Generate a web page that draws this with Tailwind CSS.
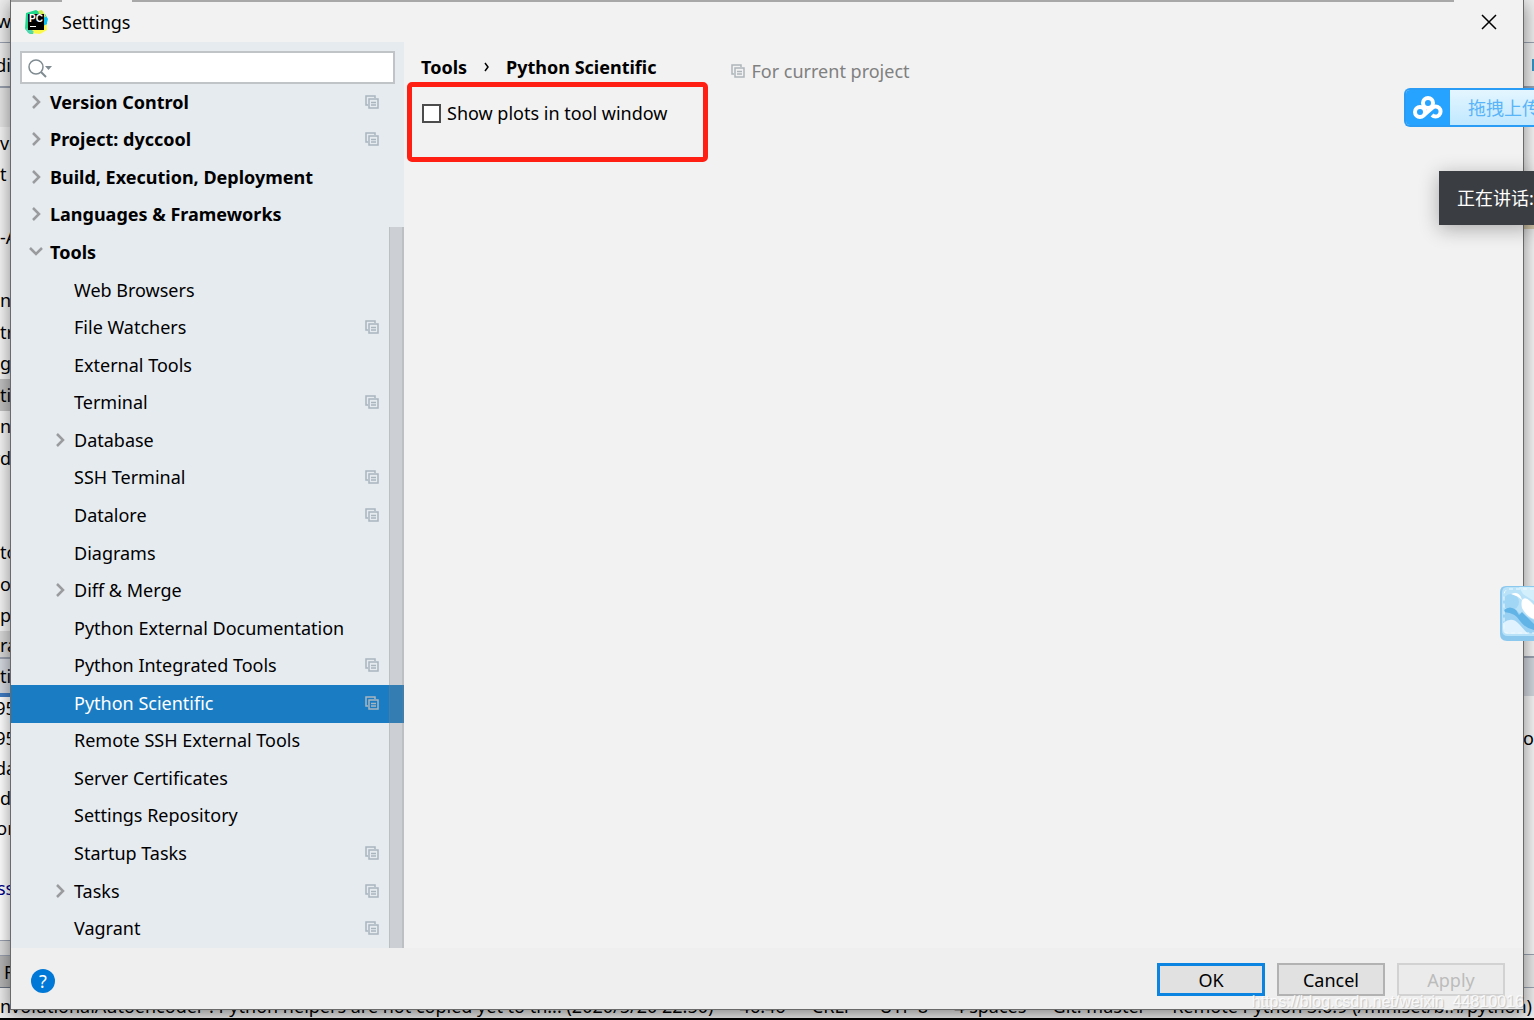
<!DOCTYPE html>
<html lang="en">
<head>
    <meta charset="UTF-8">
    <title>Settings</title>
    <script src="https://cdn.jsdelivr.net/npm/@tailwindcss/browser@4"></script>
</head>
<body class="font-['Noto_Sans','Noto_Sans_CJK_SC',sans-serif] text-[18px] leading-6 text-black">
<div class="relative h-screen overflow-hidden bg-white">

    <!-- IDE window behind the dialog -->
    <div class="flex h-full flex-col whitespace-nowrap">
        <div class="flex flex-1 justify-between">
            <div class="flex w-[11px] flex-col">
                <div class="flex h-[43px] items-center justify-end border-b border-gray-400 bg-[#ececec]">w</div>
                <div class="flex h-[45px] items-center justify-end border-b-2 border-gray-400 bg-[#ececec]">di</div>
                <div class="h-[39px] bg-[#e4e4e4]"></div>
                <div id="editor" class="flex h-[504px] flex-col"></div>
                <div class="flex h-[26px] items-end bg-[#d8d8d8]">ra</div>
                <div class="flex h-9 items-center border-t-2 border-gray-400 bg-[#d5d9e0]">ti</div>
                <div id="console" class="flex flex-1 flex-col shadow-[inset_0_4px_0_#3f7cc4]"></div>
                <div class="h-4 border-y border-gray-400 bg-[#dcdcdc]"></div>
                <div class="flex h-8 items-center border-b border-gray-500 bg-[#b4b4b4] pl-1">R</div>
            </div>
            <div class="flex w-3 flex-col">
                <div class="h-[43px] border-b border-gray-400 bg-[#ececec]"></div>
                <div class="flex h-[45px] items-center justify-end border-b-2 border-gray-400 bg-[#ececec]"><span class="h-3 w-[2px] bg-[#3592c4]"></span></div>
                <div class="h-[39px] bg-[#e4e4e4]"></div>
                <div class="h-[98px] bg-[#f4f4f4]"></div>
                <div class="h-1 bg-[#e0d3b4]"></div>
                <div class="h-[427px] bg-[#f4f4f4]"></div>
                <div class="h-10 border-t-2 border-gray-400 bg-[#d0d4dc]"></div>
                <div class="flex flex-1 items-start justify-end bg-[#f4f4f4] pt-[30px]">_o</div>
                <div class="h-[34px] border-y border-gray-400 bg-[#e6e6e6]"></div>
            </div>
        </div>
        <div class="flex h-8 items-center justify-between border-b-2 border-black bg-[#ececec] pt-[6px] pr-[2px]">
            <span>nvolutionalAutoencoder : Python helpers are not copied yet to th... (2020/5/20 22:50)</span>
            <span>46:46</span>
            <span>CRLF</span>
            <span>UTF-8</span>
            <span>4 spaces</span>
            <span>Git: master</span>
            <span>Remote Python 3.6.9 (/miniset/bin/python)</span>
        </div>
    </div>

    <!-- Settings dialog -->
    <div class="absolute inset-x-[10px] top-0 bottom-[10px] flex flex-col border-x border-b border-[#6a6a6a] bg-[#f2f2f2] shadow-[0_4px_16px_rgba(0,0,0,0.45)]">
        <div class="flex h-[2px]">
            <span class="w-[51px] bg-[#a8a8a8]"></span>
            <span class="w-[70px]"></span>
            <span class="flex-1 bg-[#a8a8a8]"></span>
            <span class="w-[69px]"></span>
        </div>
        <header class="flex h-10 items-center pl-[13px]">
            <svg class="size-6" viewBox="0 0 24 24">
                <path d="M16 3l5 1 3 5-2 7-5 1z" fill="#07c3f2"/>
                <path d="M2 3l10-3 5 3-2 9-6 12-3 0-5-5z" fill="#21d789"/>
                <path d="M15 1l4 0 3 6 1 13-7 4-9-1-1-4 9-9z" fill="#fcf84a"/>
                <path d="M19 5l4 3 0 6-4 2z" fill="#07c3f2"/>
                <path d="M14 1l4-1 3 7-4 2z" fill="#c5ec52"/>
                <path d="M1 18l6 1 3 3-3 2-3-1z" fill="#52d8b0"/>
                <rect x="4" y="4" width="16" height="16" fill="#000"/>
                <rect x="6" y="16" width="6" height="1" fill="#fff"/>
                <text x="5" y="12" font-size="10" font-weight="700" fill="#fff" font-family="Liberation Sans, sans-serif">PC</text>
            </svg>
            <h1 class="ml-[14px] flex-1">Settings</h1>
            <button class="mr-[26px]" aria-label="Close">
                <svg class="size-4" viewBox="0 0 16 16" fill="none" stroke="#000" stroke-width="1.5"><path d="M1 1l14 14M15 1L1 15"/></svg>
            </button>
        </header>

        <div class="flex min-h-0 flex-1">
            <aside class="relative flex w-[393px] flex-col bg-[#e6ebf0]">
                <div class="mx-[9px] mt-[9px] flex h-[33px] items-center border-2 border-[#c0c4c7] bg-white pl-[6px]">
                    <svg class="h-5 w-6 shrink-0" viewBox="0 0 24 20" fill="none" stroke="#7f8b91">
                        <circle cx="8" cy="9" r="7" stroke-width="1.5"/>
                        <path d="M13 14l5 5" stroke-width="2"/>
                        <path d="M17 8h7l-3.5 4z" fill="#7f8b91" stroke="none"/>
                    </svg>
                    <input type="text" aria-label="Search settings" class="min-w-0 flex-1 outline-none">
                </div>
                <ul id="tree" class="flex min-h-0 flex-1 flex-col"></ul>
                <div class="absolute top-[185px] right-0 bottom-0 w-[15px] border border-r-2 border-y-0 border-[#808080]/20 bg-[#808080]/25"></div>
            </aside>

            <main class="flex-1">
                <div class="flex items-start pt-[13px] pl-[17px]">
                    <nav class="flex items-center font-bold">
                        <a href="#">Tools</a>
                        <svg class="mx-[17px] h-[10px] w-[5px]" viewBox="0 0 5 10" fill="none" stroke="#000" stroke-width="1.5"><path d="M1 1l3 4-3 4"/></svg>
                        <a href="#">Python Scientific</a>
                    </nav>
                    <div class="mt-1 ml-[75px] flex items-center gap-[6px] text-[#808080]">
                        <svg class="size-[14px]" viewBox="0 0 14 14" fill="none" stroke="#adb5bb" stroke-width="1.5"><path d="M3 10H1V1h9v2M4 4h9v9H4zM6 7.5h5M6 10h5"/></svg>
                        <span>For current project</span>
                    </div>
                </div>
                <div class="-mt-px ml-[3px] h-[80px] w-[301px] rounded-[5px] border-[5px] border-[#ff2013]">
                    <label class="flex items-center gap-[6px] pt-[14px] pl-[10px]">
                        <input type="checkbox" class="size-[19px] appearance-none border-2 border-[#4c4c4c] bg-white">
                        Show plots in tool window
                    </label>
                </div>
            </main>
        </div>

        <footer class="flex h-[61px] items-center bg-[#efefef] pr-[18px] pl-5">
            <button class="mt-1 size-6 rounded-full bg-[#0078d7] text-white" aria-label="Help">?</button>
            <div class="mt-[2px] ml-auto flex gap-3">
                <button class="h-[33px] w-[108px] border-3 border-[#0a84e0] bg-[#e1e1e1]">OK</button>
                <button class="h-[33px] w-[108px] border-2 border-[#b2b2b2] bg-[#e1e1e1]">Cancel</button>
                <button class="h-[33px] w-[108px] border-2 border-[#d2d2d2] bg-[#ebebeb] text-[#bcbcbc]" disabled>Apply</button>
            </div>
        </footer>
    </div>

    <!-- Floating widgets -->
    <div class="absolute top-[88px] right-0 flex h-[39px] w-[130px] overflow-hidden rounded-l-md border-2 border-r-0 border-[#2b9cf5] bg-linear-to-b from-[#e4f6ff] to-[#c0e8ff] whitespace-nowrap">
        <div class="flex w-[44px] shrink-0 items-center justify-center bg-[#26a2ff]">
            <svg class="h-6 w-[30px]" viewBox="0 0 30 24" fill="none" stroke="#fff" stroke-width="4">
                <circle cx="15" cy="7" r="5"/>
                <circle cx="7" cy="16" r="5"/>
                <path d="M11 19l8-7a5 5 0 1 1 0 7"/>
            </svg>
        </div>
        <span class="self-center pl-[18px] text-[#5ab4f8]">拖拽上传</span>
    </div>
    <div class="absolute top-[171px] right-0 flex h-[54px] w-[95px] items-center bg-[#3a3d42] pl-[18px] whitespace-nowrap text-white shadow-[0_4px_20px_rgba(0,0,0,0.3)]">正在讲话:</div>
    <svg class="absolute top-[585px] right-0 h-[57px] w-[35px]" viewBox="0 0 35 57">
        <path d="M35 1H7Q1 1 1 7v42q0 7 7 7h27z" fill="#8cc8ee"/>
        <path d="M35 2H8Q3 2 3 8v37q0 6 6 6h26z" fill="#b9e2f9"/>
        <path d="M20 2h15v14L24 9z" fill="#d4effc"/>
        <circle cx="12" cy="17" r="8" fill="#a2d6f5"/>
        <path d="M4 26q9-7 16 2l15 7v13H9q-5 0-5-6z" fill="#9bd2f3"/>
        <path d="M4 38q9-7 16 1l9 10H9q-5 0-5-5z" fill="#dff2fd"/>
        <path d="M5 25q6-5 12 0l3 5 3-3 12 12v6q-8-1-14-9-4-8-16-9z" fill="#62b3e6"/>
        <path d="M12 9q7-3 10 3l1 3q3-4 8 1l4 4v14q-7-2-12-11-1-4 0-8-4-4-11-6z" fill="#fff"/>
        <path d="M35 4H10Q5 5 5 10v34q0 4 4 4h26" fill="none" stroke="#eefaff" stroke-dasharray="4 3"/>
    </svg>
    <div class="absolute right-[10px] bottom-[6px] font-['Liberation_Sans',sans-serif] text-[16px] text-white/80 [text-shadow:1px_1px_1px_rgba(0,0,0,0.2)]">https://blog.csdn.net/weixin_44810016</div>
</div>

<script>
    // [label, level, arrow, per-project icon]
    const items = [
        ['Version Control', 0, 'right', true],
        ['Project: dyccool', 0, 'right', true],
        ['Build, Execution, Deployment', 0, 'right', false],
        ['Languages & Frameworks', 0, 'right', false],
        ['Tools', 0, 'down', false],
        ['Web Browsers', 1, '', false],
        ['File Watchers', 1, '', true],
        ['External Tools', 1, '', false],
        ['Terminal', 1, '', true],
        ['Database', 1, 'right', false],
        ['SSH Terminal', 1, '', true],
        ['Datalore', 1, '', true],
        ['Diagrams', 1, '', false],
        ['Diff & Merge', 1, 'right', false],
        ['Python External Documentation', 1, '', false],
        ['Python Integrated Tools', 1, '', true],
        ['Python Scientific', 1, '', true],
        ['Remote SSH External Tools', 1, '', false],
        ['Server Certificates', 1, '', false],
        ['Settings Repository', 1, '', false],
        ['Startup Tasks', 1, '', true],
        ['Tasks', 1, 'right', true],
        ['Vagrant', 1, '', true],
    ];
    const arrows = {
        right: '<path d="M4 1l6 6-6 6"/>',
        down: '<path d="M1 3l6 6 6-6"/>',
        '': '',
    };
    const copyIcon = '<svg class="size-[14px]" viewBox="0 0 14 14" fill="none" stroke="#a9b5bd" stroke-width="1.5"><path d="M3 10H1V1h9v2M4 4h9v9H4zM6 7.5h5M6 10h5"/></svg>';

    document.getElementById('tree').innerHTML = items.map(([label, level, arrow, icon]) => {
        const indent = level ? 'pl-[42px]' : 'pl-[18px] font-bold';
        const selected = label === 'Python Scientific' ? 'bg-[#1a7dc4] text-white' : '';
        return `
            <li class="flex flex-1 items-center pr-[25px] pb-[2px] ${indent} ${selected}">
                <svg class="mr-[7px] size-[14px]" viewBox="0 0 14 14" fill="none" stroke="#999b9d" stroke-width="2.5">${arrows[arrow]}</svg>
                <span class="flex-1">${label.replace('&', '&amp;')}</span>
                ${icon ? copyIcon : ''}
            </li>`;
    }).join('');

    const editor = ['vo', 't', '', '-A', '', 'n', 'tr', 'g', 'ti', 'ng', 'rd', '', '', 'to', 'or', 'g.p'];
    const clippedLeft = ['n', 'g', 'rd', 'g.p'];
    document.getElementById('editor').innerHTML = editor.map((text, i) =>
        `<div class="flex flex-1 items-center ${clippedLeft.includes(text) ? 'justify-end' : ''} ${i === 8 ? 'bg-[#c0c0c0]' : 'bg-[#f4f4f4]'}">${text}</div>`
    ).join('');

    const output = ['95', '95', 'da', 'd', 'or', '', 'ss'];
    document.getElementById('console').innerHTML = output.map(text =>
        `<div class="flex h-[30px] items-center justify-center ${text === 'ss' ? 'text-[#00008b]' : ''}">${text}</div>`
    ).join('');
</script>
</body>
</html>
